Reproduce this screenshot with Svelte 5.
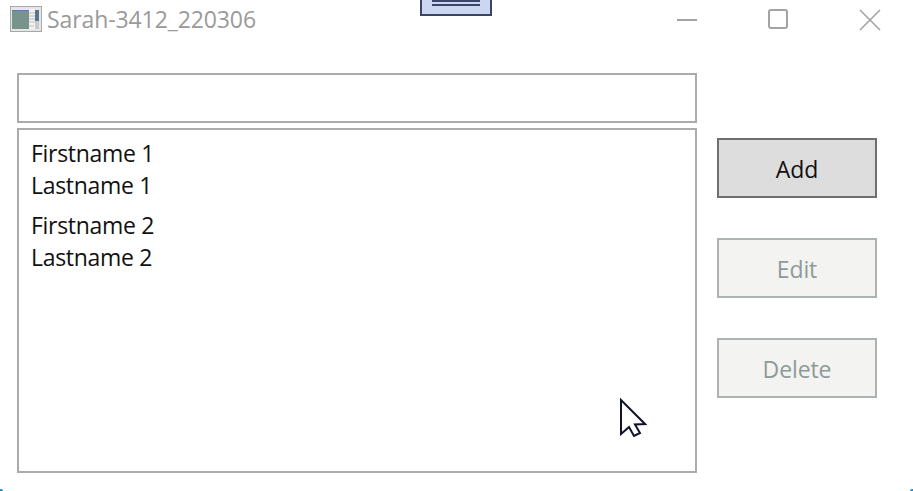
<script>
	let people = [
		{ first: 'Firstname 1', last: 'Lastname 1' },
		{ first: 'Firstname 2', last: 'Lastname 2' }
	];
</script>

<main class="window">
	<header class="titlebar">
		<svg class="appicon" width="32" height="26" viewBox="0 0 32 26">
			<rect x="0.5" y="0.5" width="31" height="25" fill="#e6e6e6" stroke="#a8a8a8" />
			<rect x="2" y="4" width="17" height="19" fill="#76938c" />
			<rect x="2" y="4" width="17" height="1" fill="#5c7fa8" />
			<path d="M19 3h6v20h-6z" fill="#f2f2f2" />
			<path d="M19 7h6M19 10h6M19 13h6M19 16h6M19 20h5" stroke="#bdbdbd" stroke-width="1" />
			<rect x="25" y="4" width="4" height="11" fill="#55768c" />
			<rect x="25" y="15" width="4" height="8" fill="#c9c9c9" />
		</svg>
		<span class="title">Sarah-3412_220306</span>
		<div class="controls">
			<svg width="22" height="22" viewBox="0 0 22 22"><path d="M0 11h20" stroke="#a6a2a2" stroke-width="2" /></svg>
			<svg width="22" height="22" viewBox="0 0 22 22"><rect x="1" y="1" width="18" height="18" rx="2" fill="none" stroke="#a6a2a2" stroke-width="2" /></svg>
			<svg width="22" height="22" viewBox="0 0 22 22"><path d="M1 1l20 20M21 1L1 21" stroke="#a6a2a2" stroke-width="1.6" /></svg>
		</div>
	</header>

	<section class="content">
		<div class="left">
			<input class="textbox" type="text" />
			<ul class="list">
				{#each people as p}
					<li>
						<div>{p.first}</div>
						<div>{p.last}</div>
					</li>
				{/each}
			</ul>
		</div>
		<div class="buttons">
			<button class="btn primary">Add</button>
			<button class="btn" disabled>Edit</button>
			<button class="btn" disabled>Delete</button>
		</div>
	</section>

	<!-- bit of another window poking in at the top -->
	<div class="peek"><span></span><span></span></div>

	<svg class="cursor" width="28" height="40" viewBox="0 0 28 40">
		<path d="M2 2V36L10 29L15 38L21 35L16 26.500L26 26Z" fill="#fff" stroke="#10132a" stroke-width="2" stroke-linejoin="miter" />
	</svg>

	<i class="corner cl"></i>
	<i class="corner cr"></i>
</main>

<style>
	:global(body) {
		margin: 0;
		background: #fff;
	}

	.window {
		position: relative;
		width: 913px;
		height: 491px;
		overflow: hidden;
		background: #fff;
		font-family: "Open Sans", "Noto Sans", sans-serif;
		color: #111;
	}

	.titlebar {
		display: flex;
		align-items: center;
		height: 40px;
		padding: 0 0 2px 10px;
		box-sizing: border-box;
	}

	.appicon {
		margin-right: 5px;
	}

	.title {
		font-size: 23px;
		color: #9a9a9a;
		letter-spacing: -0.1px;
	}

	.controls {
		margin-left: auto;
		display: flex;
		gap: 69px;
		padding-right: 32px;
	}

	.controls svg {
		position: relative;
		top: 1px;
	}

	.content {
		display: flex;
		padding: 33px 0 0 17px;
	}

	.left {
		display: flex;
		flex-direction: column;
		gap: 5px;
		width: 680px;
	}

	.textbox {
		display: block;
		box-sizing: border-box;
		width: 100%;
		height: 50px;
		border: 2px solid #ababad;
		background: #fff;
		outline: none;
		padding: 0;
	}

	.list {
		box-sizing: border-box;
		height: 345px;
		margin: 0;
		padding: 7px 12px;
		list-style: none;
		border: 2px solid #ababad;
		font-size: 23px;
		letter-spacing: -0.3px;
		line-height: 32px;
	}

	.list li {
		margin-bottom: 8px;
	}

	.buttons {
		display: flex;
		flex-direction: column;
		gap: 40px;
		padding: 65px 0 0 20px;
	}

	.btn {
		box-sizing: border-box;
		width: 160px;
		height: 60px;
		padding: 2px 0 0;
		border: 2px solid #adb2b2;
		background: #f3f3f1;
		color: #8f9a98;
		font-family: inherit;
		font-size: 23px;
		letter-spacing: -0.1px;
	}

	.primary {
		border-color: #6f6f6f;
		background: #dddddd;
		color: #111;
	}

	.peek {
		position: absolute;
		left: 420px;
		top: -2px;
		width: 68px;
		height: 14px;
		background: #cbd6f0;
		border: 2px solid #3c4568;
		display: flex;
		flex-direction: column;
		align-items: center;
		gap: 2px;
	}

	.peek span {
		display: block;
		width: 48px;
		height: 2px;
		background: #3c4568;
	}

	.cursor {
		position: absolute;
		left: 619px;
		top: 398px;
	}

	.corner {
		position: absolute;
		bottom: 0;
		width: 3px;
		height: 2px;
		background: #1f8fd8;
	}

	.cl {
		left: 0;
		border-top-right-radius: 2px;
	}

	.cr {
		right: 0;
		border-top-left-radius: 2px;
	}
</style>
